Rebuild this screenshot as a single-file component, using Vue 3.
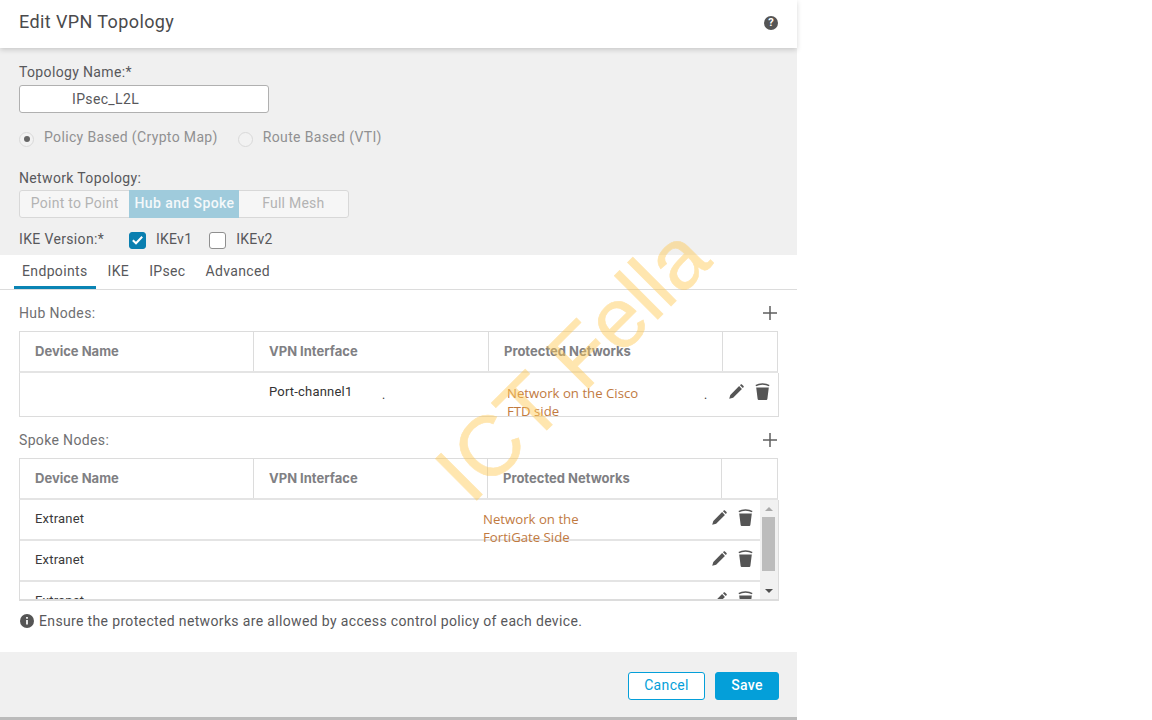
<script setup>
const tabs = ['Endpoints', 'IKE', 'IPsec', 'Advanced']
const heads = ['Device Name', 'VPN Interface', 'Protected Networks', '']
const spokes = ['Extranet', 'Extranet', 'Extranet']
const pencil = 'M.2 15.8l1.2-4.2 9.4-9.4 3 3-9.4 9.4-4.2 1.2zM11.7 1.3l.8-.8c.4-.4.9-.4 1.3 0l1.7 1.7c.4.4.4.9 0 1.3l-.8.8-3-3z'
const can = 'M1.2 4.6h12.6l-1.4 11.2c-.1.8-.5 1.2-1.1 1.2H3.7c-.6 0-1-.4-1.1-1.2L1.2 4.6z'
const lid = 'M.8 2.6C4.3.4 10.7.4 14.2 2.6'
</script>

<template>
  <div class="dialog">
    <header class="head">
      <h1 class="title">Edit VPN Topology</h1>
      <span class="help">?</span>
    </header>

    <section class="form">
      <label class="lbl">Topology Name:*</label>
      <div class="input">IPsec_L2L</div>
      <div class="radios">
        <span class="radio on"></span><span class="radio-text">Policy Based (Crypto Map)</span>
        <span class="radio second"></span><span class="radio-text">Route Based (VTI)</span>
      </div>
      <label class="lbl net">Network Topology:</label>
      <div class="seg">
        <span class="seg-item">Point to Point</span>
        <span class="seg-item active">Hub and Spoke</span>
        <span class="seg-item">Full Mesh</span>
      </div>
      <div class="ike">
        <span class="ike-label">IKE Version:*</span>
        <span class="check checked">
          <svg viewBox="0 0 16 16" width="16" height="16"><path d="M3 8.2l3.4 3.2L13 4.6" fill="none" stroke="#fff" stroke-width="2.2"/></svg>
        </span>
        <span class="ike-text">IKEv1</span>
        <span class="check"></span>
        <span class="ike-text">IKEv2</span>
      </div>
    </section>

    <nav class="tabs">
      <span v-for="(t, i) in tabs" :key="t" class="tab" :class="{ current: i === 0 }">{{ t }}</span>
    </nav>

    <section class="body">
      <div class="sec-head">
        <span>Hub Nodes:</span>
        <svg class="plus" viewBox="0 0 14 14" width="14" height="14"><path d="M7 0v14M0 7h14" stroke="#5f5f5f" stroke-width="1.5"/></svg>
      </div>
      <div class="tbl-head hub-cols">
        <span v-for="h in heads" :key="h" class="th">{{ h }}</span>
      </div>
      <div class="hub-row hub-cols">
        <span class="td"></span>
        <span class="td port">Port-channel1<i class="dot d1">.</i></span>
        <span class="td"></span>
        <span class="acts hub-acts">
          <svg viewBox="0 0 16 16" width="15" height="15"><path :d="pencil" fill="#555"/></svg>
          <svg viewBox="0 0 15 17" width="15" height="17"><path :d="lid" fill="none" stroke="#555" stroke-width="1.4"/><path :d="can" fill="#555"/></svg>
        </span>
        <span class="note note-hub">Network on the Cisco<br>FTD side</span>
        <i class="dot d2">.</i>
      </div>

      <div class="sec-head spoke-head">
        <span>Spoke Nodes:</span>
        <svg class="plus" viewBox="0 0 14 14" width="14" height="14"><path d="M7 0v14M0 7h14" stroke="#5f5f5f" stroke-width="1.5"/></svg>
      </div>
      <div class="tbl-head spoke-cols">
        <span v-for="h in heads" :key="h" class="th">{{ h }}</span>
      </div>
      <div class="spoke-box">
        <div class="rows">
          <div v-for="(s, i) in spokes" :key="i" class="spoke-row">
            <span class="name">{{ s }}</span>
            <span class="acts">
              <svg viewBox="0 0 16 16" width="15" height="15"><path :d="pencil" fill="#555"/></svg>
              <svg viewBox="0 0 15 17" width="15" height="17"><path :d="lid" fill="none" stroke="#555" stroke-width="1.4"/><path :d="can" fill="#555"/></svg>
            </span>
          </div>
        </div>
        <div class="scroll">
          <span class="arrow up"></span>
          <span class="thumb"></span>
          <span class="arrow down"></span>
        </div>
        <span class="note note-spoke">Network on the<br>FortiGate Side</span>
      </div>

      <p class="info">
        <svg viewBox="0 0 14 14" width="14" height="14"><circle cx="7" cy="7" r="7" fill="#555"/><path d="M7 3.1v1.6M7 6v4.6" stroke="#fff" stroke-width="1.7"/></svg>
        <span>Ensure the protected networks are allowed by access control policy of each device.</span>
      </p>
    </section>

    <footer class="foot">
      <button class="btn cancel">Cancel</button>
      <button class="btn save">Save</button>
    </footer>
    <div class="mark">ICT Fella</div>
  </div>
</template>

<style>
html, body { background: #fff; overflow: hidden; }
</style>

<style scoped>
.dialog {
  position: relative;
  width: 797px;
  height: 720px;
  overflow: visible;
  font-family: Roboto, "Liberation Sans", sans-serif;
  color: #58585b;
  font-size: 14px;
  letter-spacing: .35px;
  display: flex;
  flex-direction: column;
}
.head {
  height: 48px;
  flex: none;
  display: flex;
  align-items: center;
  justify-content: space-between;
  padding: 0 19px;
  background: #fff;
  box-shadow: 0 2px 5px rgba(0,0,0,.16);
  position: relative;
  z-index: 1;
  box-sizing: border-box;
}
.title { margin: 0 0 5px; font-size: 18px; font-weight: 400; color: #4a4a4c; letter-spacing: .4px; }
.help {
  width: 14px; height: 14px; border-radius: 50%; background: #555; color: #fff;
  font-size: 11px; font-weight: 700; line-height: 14px; text-align: center; margin: 0 0 2px; letter-spacing: 0;
}
.form {
  flex: none;
  height: 207px;
  background: #f0f0f0;
  padding: 16px 19px 0;
  box-sizing: border-box;
}
.lbl { display: block; font-size: 14px; line-height: 16px; color: #58585b; }
.input {
  width: 250px; height: 28px; box-sizing: border-box; margin-top: 5px;
  background: #fff; border: 1px solid #b0b0b0; border-radius: 3px;
  padding-left: 52px; line-height: 26px; color: #58585b;
}
.radios { display: flex; align-items: center; height: 20px; margin-top: 14px; color: #909092; }
.radio {
  width: 15px; height: 15px; box-sizing: border-box; border-radius: 50%;
  border: 1px solid #d9d9d9; background: #f2f2f2; position: relative; top: 2px; flex: none;
}
.radio.on::after {
  content: ""; position: absolute; left: 3.5px; top: 3.5px; width: 6px; height: 6px;
  border-radius: 50%; background: #666;
}
.radio.second { margin-left: 20px; }
.radio-text { margin-left: 10px; }
.net { margin-top: 23px; }
.seg {
  display: flex; width: 330px; height: 28px; margin-top: 4px; box-sizing: border-box;
  border: 1px solid #d8d8d8; border-radius: 3px; background: #f6f6f6;
}
.seg-item { width: 110px; text-align: center; line-height: 24px; color: #b3b3b3; letter-spacing: .25px; }
.seg-item.active {
  background: #9fcbdc; color: #f4f8fa; font-weight: 500; margin: -1px 0; line-height: 26px; width: 110px;
  letter-spacing: .4px; padding-left: 1px; box-sizing: border-box;
}
.ike { display: flex; align-items: center; height: 20px; margin-top: 11px; }
.ike-label { width: 110px; }
.check {
  width: 17px; height: 17px; box-sizing: border-box; border: 1px solid #8f8f8f; border-radius: 3px;
  background: #fff; margin-top: 2px; display: flex; align-items: center; justify-content: center;
}
.check.checked { background: #0a7fb0; border-color: #0a7fb0; }
.ike-text { margin-left: 10px; margin-right: 17px; letter-spacing: .25px; }
.tabs {
  flex: none; height: 35px; box-sizing: border-box; padding-left: 14px; display: flex;
  background: #fff; border-bottom: 1px solid #dcdcdc;
}
.tab { padding: 8px 8px 0; height: 34px; box-sizing: border-box; line-height: 16px; margin-right: 4px; color: #58585b; }
.tab.current { border-bottom: 3px solid #0a84b4; }
.body { flex: 1; background: #fff; padding: 14px 19px 0; min-height: 0; }
.sec-head {
  display: flex; justify-content: space-between; align-items: center; height: 18px;
  width: 758px; color: #707072; padding-right: 0;
}
.spoke-head { margin-top: 14px; }
.plus { margin-right: 0; }
.tbl-head {
  display: grid; height: 42px; margin-top: 9px; box-sizing: border-box; width: 759px;
  border: 1px solid #dcdcdc; border-bottom: 2px solid #e4e4e4;
}
.hub-cols { grid-template-columns: 234px 235px 234px 1fr; }
.spoke-cols { grid-template-columns: 234px 234px 234px 1fr; }
.th {
  font-family: Inter, Roboto, sans-serif; letter-spacing: 0;
  font-size: 13px; font-weight: 700; color: #808083; line-height: 39px; padding-left: 15px;
  border-right: 1px solid #dcdcdc;
}
.th:last-child { border-right: 0; }
.hub-row {
  display: grid; width: 760px; height: 44px; box-sizing: border-box; position: relative;
  border: 1px solid #dcdcdc; border-top: 0;
}
.td { font-size: 13px; color: #333; padding-left: 15px; line-height: 38px; letter-spacing: .2px; }
.port { position: relative; }
.dot { position: absolute; font-style: normal; font-size: 12px; color: #333; }
.d1 { left: 128px; top: 3px; }
.d2 { left: 684px; top: 3px; line-height: 38px; }
.acts { display: flex; align-items: center; gap: 11px; }
.hub-acts { padding-left: 6px; margin-top: -6px; }
.note {
  position: absolute; font-family: "Open Sans", sans-serif; font-size: 13.2px; line-height: 18px;
  color: #c17a3f; white-space: nowrap; letter-spacing: 0;
}
.note-hub { left: 487px; top: 11px; }
.note-spoke { left: 463px; top: 10px; }
.spoke-box {
  position: relative; width: 760px; height: 101px; overflow: hidden; box-sizing: border-box;
  display: flex; border: 1px solid #dcdcdc; border-top: 0; border-bottom-width: 2px;
}
.rows { flex: 1; }
.spoke-row {
  height: 41px; box-sizing: border-box; border-bottom: 2px solid #e4e4e4;
  display: flex; align-items: center; justify-content: space-between; padding: 0 7px 0 15px;
}
.spoke-row .acts { margin-right: 0; margin-top: -5px; }
.name { font-size: 13px; color: #3a3a3a; margin-top: -3px; letter-spacing: .2px; }
.scroll {
  width: 18px; flex: none; background: #f1f1f1; position: relative;
}
.thumb { position: absolute; left: 2px; top: 17px; width: 13px; height: 54px; background: #bcbcbc; }
.arrow { position: absolute; left: 5px; width: 0; height: 0; border-left: 4px solid transparent; border-right: 4px solid transparent; }
.arrow.up { top: 7px; border-bottom: 4px solid #aaa; }
.arrow.down { top: 89px; border-top: 4px solid #505050; }
.info {
  margin: 11px 0 0; display: flex; align-items: center; gap: 5px; height: 18px;
  color: #58585b; padding-left: 1px;
}
.foot {
  flex: none; height: 68px; box-sizing: border-box; background: #f0f0f0;
  border-bottom: 3px solid #bbb; display: flex; justify-content: flex-end; align-items: flex-start;
  gap: 10px; padding: 20px 18px 0 0;
}
.btn {
  height: 28px; border-radius: 3px; font: 14px Roboto, sans-serif; padding: 0 0 2px; box-sizing: border-box; letter-spacing: .35px;
}
.cancel { width: 77px; background: #fff; border: 1px solid #049fd9; color: #049fd9; }
.save { width: 64px; background: #049fd9; border: 1px solid #049fd9; color: #fff; font-weight: 500; }
.mark {
  position: absolute; left: 397px; top: 314px; width: 350px; text-align: center;
  font-family: "Liberation Sans", sans-serif; font-size: 85px; line-height: 100px; letter-spacing: 0;
  color: #ffc850; -webkit-text-stroke: .6px #ffc850; opacity: .45;
  transform: rotate(-45deg); white-space: nowrap; pointer-events: none;
  z-index: 2; font-weight: 400;
}
</style>
